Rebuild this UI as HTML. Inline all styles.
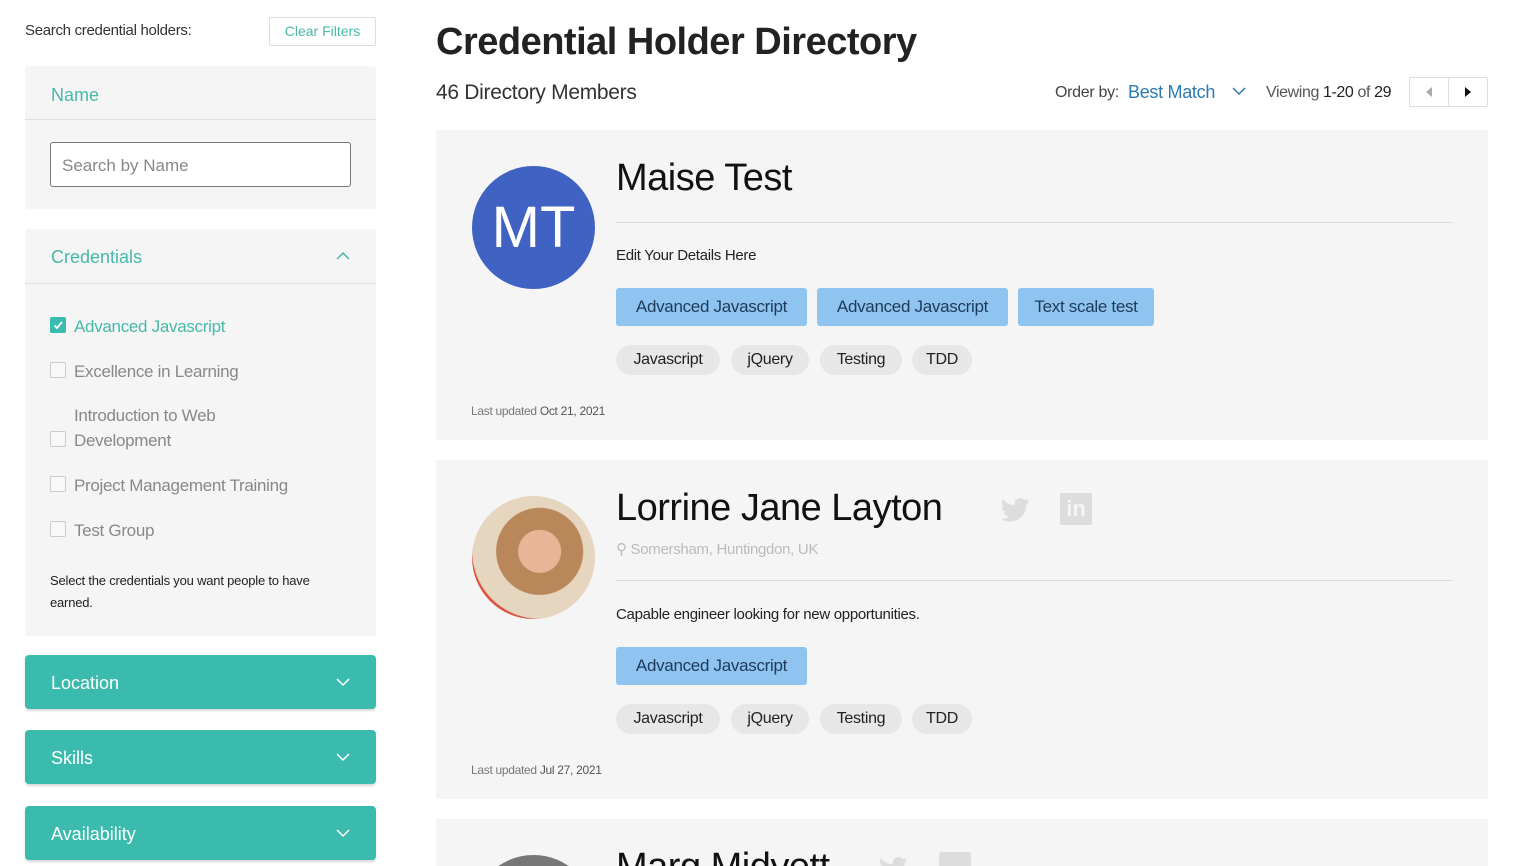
<!DOCTYPE html>
<html><head><meta charset="utf-8"><style>
*{box-sizing:border-box;margin:0;padding:0}
html,body{width:1514px;height:866px;overflow:hidden}
body{background:#fff;font-family:"Liberation Sans",sans-serif;position:relative;color:#222}
.a{position:absolute;white-space:nowrap}
.panel{position:absolute;background:#f5f5f5;border-radius:3px}
.teal{color:#46b9ab}
.cb{position:absolute;width:16px;height:16px;border:1px solid #ccc;background:#f8f8f8;border-radius:2px}
.lbl{font-size:17px;color:#888;letter-spacing:-0.3px}
.acc{position:absolute;left:25px;width:351px;height:54px;background:#3bbbad;border-radius:4px;box-shadow:0 2px 2px rgba(0,0,0,.15);color:#fff;font-size:18px;padding:18px 0 0 26px}
.chev{position:absolute;right:26px;top:23px}
.card{position:absolute;left:436px;width:1052px;background:#f5f5f5}
.cred{position:absolute;height:38px;background:#8ec4ef;border-radius:3px;color:#1e3a5a;font-size:17px;text-align:center;line-height:38px;letter-spacing:-0.3px}
.sk{position:absolute;height:30px;background:#e7e7e7;border-radius:15px;font-size:16px;text-align:center;line-height:30px;color:#222;letter-spacing:-0.3px}
.upd{font-size:12px;color:#777;letter-spacing:-0.3px}
.upd b{color:#555;font-weight:normal}
</style></head><body>
<div class="a" style="left:25px;top:22px;font-size:15px;color:#333;letter-spacing:-0.3px">Search credential holders:</div>
<div class="a" style="left:269px;top:17px;width:107px;height:29px;border:1px solid #ddd;border-radius:2px;font-size:14px;text-align:center;line-height:27px" ><span class="teal">Clear Filters</span></div>

<div class="panel" style="left:25px;top:66px;width:351px;height:143px">
 <div class="a teal" style="left:26px;top:19px;font-size:18px">Name</div>
 <div style="position:absolute;left:0;right:0;top:53px;border-top:1px solid #e0e0e0"></div>
 <div class="a" style="left:25px;top:76px;width:301px;height:45px;border:1px solid #777;border-radius:3px;background:#fff;font-size:17px;color:#888;padding:13px 0 0 11px">Search by Name</div>
</div>

<div class="panel" style="left:25px;top:229px;width:351px;height:407px">
 <div class="a teal" style="left:26px;top:18px;font-size:18px">Credentials</div>
 <svg class="a" style="left:311px;top:22px" width="14" height="9"><path d="M1 8L7 2L13 8" fill="none" stroke="#46b9ab" stroke-width="1.5"/></svg>
 <div style="position:absolute;left:0;right:0;top:54px;border-top:1px solid #e0e0e0"></div>
 <div class="cb" style="left:25px;top:88px;background:#3bbbad;border-color:#3bbbad"><svg width="14" height="14" style="position:absolute;left:0;top:0"><path d="M3.5 7.5L6 10L11 4" fill="none" stroke="#fff" stroke-width="1.8"/></svg></div>
 <div class="a lbl teal" style="left:49px;top:88px;color:#46b9ab">Advanced Javascript</div>
 <div class="cb" style="left:25px;top:133px"></div><div class="a lbl" style="left:49px;top:133px">Excellence in Learning</div>
 <div class="a lbl" style="left:49px;top:177px">Introduction to Web</div>
 <div class="cb" style="left:25px;top:202px"></div><div class="a lbl" style="left:49px;top:202px">Development</div>
 <div class="cb" style="left:25px;top:247px"></div><div class="a lbl" style="left:49px;top:247px">Project Management Training</div>
 <div class="cb" style="left:25px;top:292px"></div><div class="a lbl" style="left:49px;top:292px">Test Group</div>
 <div class="a" style="left:25px;top:341px;font-size:13px;line-height:22px;color:#222;white-space:normal;width:300px;letter-spacing:-0.2px">Select the credentials you want people to have earned.</div>
</div>

<div class="acc" style="top:655px">Location<svg class="chev" width="14" height="9"><path d="M1 1L7 7L13 1" fill="none" stroke="#fff" stroke-width="1.5"/></svg></div>
<div class="acc" style="top:730px">Skills<svg class="chev" width="14" height="9"><path d="M1 1L7 7L13 1" fill="none" stroke="#fff" stroke-width="1.5"/></svg></div>
<div class="acc" style="top:806px">Availability<svg class="chev" width="14" height="9"><path d="M1 1L7 7L13 1" fill="none" stroke="#fff" stroke-width="1.5"/></svg></div>

<div class="a" style="left:436px;top:21px;font-size:38px;font-weight:bold;color:#222;letter-spacing:-0.5px">Credential Holder Directory</div>
<div class="a" style="left:436px;top:81px;font-size:21px;color:#333;letter-spacing:-0.3px">46 Directory Members</div>
<div class="a" style="left:1055px;top:84px;font-size:16px;color:#444;letter-spacing:-0.3px">Order by:</div>
<div class="a" style="left:1128px;top:82px;font-size:18px;color:#2b7ab0;letter-spacing:-0.3px">Best Match</div>
<svg class="a" style="left:1232px;top:87px" width="14" height="9"><path d="M1 1L7 7L13 1" fill="none" stroke="#2b7ab0" stroke-width="1.5"/></svg>
<div class="a" style="left:1266px;top:84px;font-size:16px;color:#555;letter-spacing:-0.4px">Viewing <span style="color:#222">1-20</span> of <span style="color:#222">29</span></div>
<div class="a" style="left:1409px;top:77px;width:79px;height:30px;border:1px solid #ddd;border-radius:2px"></div>
<div class="a" style="left:1448px;top:77px;height:30px;border-left:1px solid #ddd"></div>
<svg class="a" style="left:1425px;top:87px" width="8" height="10"><path d="M7 0L1 5L7 10Z" fill="#aaa"/></svg>
<svg class="a" style="left:1464px;top:87px" width="8" height="10"><path d="M1 0L7 5L1 10Z" fill="#111"/></svg>

<div class="card" style="top:130px;height:310px">
 <div class="a" style="left:36px;top:36px;width:123px;height:123px;border-radius:50%;background:#3f62c3;color:#fff;font-size:58px;text-align:center;line-height:123px">MT</div>
 <div class="a" style="left:180px;top:27px;font-size:38px;color:#111;letter-spacing:-0.5px">Maise Test</div>
 <div style="position:absolute;left:180px;right:35px;top:92px;border-top:1px solid #ddd"></div>
 <div class="a" style="left:180px;top:117px;font-size:15px;color:#222;letter-spacing:-0.3px">Edit Your Details Here</div>
 <div class="cred" style="left:180px;top:158px;width:191px">Advanced Javascript</div>
 <div class="cred" style="left:381px;top:158px;width:191px">Advanced Javascript</div>
 <div class="cred" style="left:582px;top:158px;width:136px">Text scale test</div>
 <div class="sk" style="left:180px;top:215px;width:104px">Javascript</div>
 <div class="sk" style="left:295px;top:215px;width:78px">jQuery</div>
 <div class="sk" style="left:384px;top:215px;width:82px">Testing</div>
 <div class="sk" style="left:476px;top:215px;width:60px">TDD</div>
 <div class="a upd" style="left:35px;top:274px">Last updated <b>Oct 21, 2021</b></div>
</div>

<div class="card" style="top:460px;height:339px">
 <div class="a" style="left:36px;top:36px;width:123px;height:123px;border-radius:50%;background:radial-gradient(circle at 55% 45%,#e9b597 0 22%,#b9875a 23% 45%,#e6d6c0 46% 70%,#d9553f 71%);overflow:hidden"></div>
 <div class="a" style="left:180px;top:27px;font-size:38px;color:#111;letter-spacing:-0.5px">Lorrine Jane Layton</div>
 <svg class="a" style="left:564px;top:38px" width="30" height="24" viewBox="0 0 24 20"><path d="M24 2.4c-.9.4-1.8.6-2.8.8 1-.6 1.8-1.6 2.2-2.7-1 .6-2 1-3.1 1.2C19.3.7 18 0 16.6 0c-2.700 0-4.9 2.2-4.9 4.9 0 .4 0 .8.1 1.1C7.7 5.8 4.1 3.9 1.7.9c-.4.7-.7 1.6-.7 2.5 0 1.7.9 3.2 2.200 4.1-.8 0-1.6-.2-2.2-.6v.1c0 2.4 1.700 4.4 3.9 4.8-.4.1-.8.2-1.3.2-.3 0-.6 0-.9-.1.6 2 2.4 3.4 4.600 3.4-1.7 1.300-3.8 2.1-6.1 2.1H0c2.2 1.4 4.8 2.2 7.5 2.2 9.1 0 14-7.5 14-14v-.6c1-.7 1.8-1.6 2.5-2.5z" fill="#ddd"/></svg>
 <div class="a" style="left:624px;top:33px;width:32px;height:32px;background:#ddd;border-radius:2px;color:#f5f5f5;font-weight:bold;font-size:22px;text-align:center;line-height:32px">in</div>
 <div class="a" style="left:180px;top:80px;font-size:15px;color:#bbb;letter-spacing:-0.3px">&#9906; Somersham, Huntingdon, UK</div>
 <div style="position:absolute;left:180px;right:35px;top:120px;border-top:1px solid #ddd"></div>
 <div class="a" style="left:180px;top:146px;font-size:15px;color:#222;letter-spacing:-0.3px">Capable engineer looking for new opportunities.</div>
 <div class="cred" style="left:180px;top:187px;width:191px">Advanced Javascript</div>
 <div class="sk" style="left:180px;top:244px;width:104px">Javascript</div>
 <div class="sk" style="left:295px;top:244px;width:78px">jQuery</div>
 <div class="sk" style="left:384px;top:244px;width:82px">Testing</div>
 <div class="sk" style="left:476px;top:244px;width:60px">TDD</div>
 <div class="a upd" style="left:35px;top:303px">Last updated <b>Jul 27, 2021</b></div>
</div>

<div class="card" style="top:819px;height:47px;overflow:hidden">
 <div class="a" style="left:36px;top:36px;width:123px;height:123px;border-radius:50%;background:#777"></div>
 <div class="a" style="left:180px;top:27px;font-size:38px;color:#111;letter-spacing:-0.5px">Marg Midyett</div>
 <svg class="a" style="left:442px;top:38px" width="30" height="24" viewBox="0 0 24 20"><path d="M24 2.4c-.9.4-1.8.6-2.8.8 1-.6 1.8-1.6 2.2-2.7-1 .6-2 1-3.1 1.2C19.3.7 18 0 16.6 0c-2.7 0-4.9 2.2-4.9 4.9 0 .4 0 .8.1 1.1C7.7 5.8 4.1 3.9 1.7.9c-.4.7-.7 1.6-.7 2.5 0 1.7.9 3.2 2.2 4.1-.8 0-1.6-.2-2.2-.6v.1c0 2.4 1.7 4.4 3.9 4.8-.4.1-.8.2-1.3.2-.3 0-.6 0-.9-.1.6 2 2.4 3.4 4.6 3.4-1.7 1.3-3.8 2.1-6.1 2.1H0c2.2 1.4 4.8 2.2 7.5 2.2 9.1 0 14-7.5 14-14v-.6c1-.7 1.8-1.6 2.5-2.5z" fill="#ddd"/></svg>
 <div class="a" style="left:503px;top:33px;width:32px;height:32px;background:#ddd;border-radius:2px"></div>
</div>
</body></html>
